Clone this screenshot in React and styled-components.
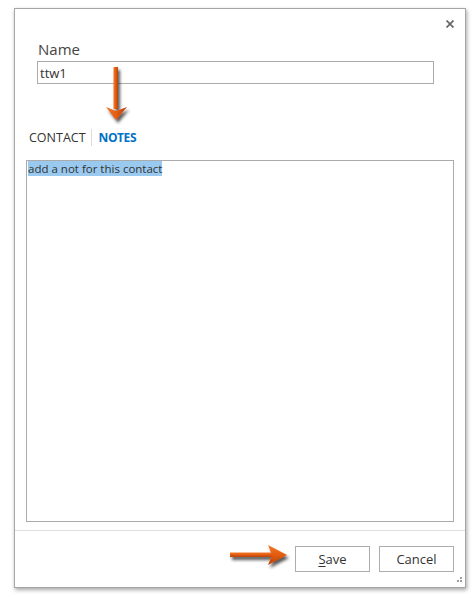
import React from "react"
import styled, { createGlobalStyle } from "styled-components"

const GlobalStyle = createGlobalStyle`
    html, body {
        margin: 0;
        padding: 0;
        background: #ffffff;
    }
    body {
        font-family: "Open Sans", "Noto Sans", sans-serif;
        color: #333333;
    }
`;

const Page = styled.div`
    position: relative;
    width: 476px;
    height: 602px;
    padding: 8px 10px 0 14px;
    box-sizing: border-box;
`;

const Dialog = styled.div`
    position: relative;
    width: 452px;
    height: 580px;
    box-sizing: border-box;
    border: 1px solid #a6a6a6;
    background: #ffffff;
    box-shadow: 1px 2px 4px rgba(0, 0, 0, 0.35);
    display: flex;
    flex-direction: column;
`;

const Header = styled.div`
    height: 30px;
    box-sizing: border-box;
    display: flex;
    justify-content: flex-end;
    align-items: flex-start;
    padding: 11px 11px 0 0;
`;

const CloseButton = styled.button`
    width: 8px;
    height: 8px;
    padding: 0;
    border: none;
    background: none;
    display: flex;
    cursor: pointer;
`;

const NameSection = styled.div`
    display: flex;
    flex-direction: column;
    padding-left: 22px;
`;

const Label = styled.label`
    font-size: 15px;
    line-height: 20px;
    height: 20px;
    padding-left: 1px;
    color: #444444;
`;

const TextInput = styled.input`
    margin-top: 2px;
    width: 397px;
    height: 23px;
    box-sizing: border-box;
    border: 1px solid #ababab;
    padding: 0 2px;
    font-family: "Open Sans", "Noto Sans", sans-serif;
    font-size: 13px;
    color: #333333;
    outline: none;
`;

const Tabs = styled.div`
    margin-top: 43px;
    height: 20px;
    padding-left: 14px;
    display: flex;
    align-items: center;
`;

const Tab = styled.span`
    font-size: ${props => props.active ? '12px' : '12.5px'};
    font-weight: ${props => props.active ? 700 : 400};
    color: ${props => props.active ? '#0072c6' : '#333333'};
    letter-spacing: ${props => props.active ? '-0.4px' : '0'};
`;

const TabDivider = styled.span`
    width: 1px;
    height: 17px;
    background: #dcdcdc;
    margin: 0 7px 0 5px;
`;

const NotesBox = styled.div`
    margin: 13px 0 0 11px;
    width: 428px;
    height: 362px;
    box-sizing: border-box;
    border: 1px solid #ababab;
    padding: 1px 0 0 1px;
    font-size: 11.5px;
    line-height: 14px;
`;

const Selected = styled.span`
    background: #99c9ef;
    color: #333333;
`;

const Footer = styled.div`
    margin-top: 8px;
    border-top: 1px solid #dedede;
    padding: 15px 11px 0 0;
    display: flex;
    justify-content: flex-end;
    gap: 9px;
`;

const Button = styled.button`
    width: 75px;
    height: 26px;
    box-sizing: border-box;
    border: 1px solid #adadad;
    background: #ffffff;
    font-family: "Open Sans", "Noto Sans", sans-serif;
    font-size: 13px;
    color: #333333;
    padding: 0;
    cursor: pointer;

    u {
        text-decoration: underline;
        text-underline-offset: 2px;
    }
`;

const Grip = styled.svg`
    position: absolute;
    right: 3px;
    bottom: 3px;
`;

const Arrow = styled.svg`
    position: absolute;
    left: ${props => props.x}px;
    top: ${props => props.y}px;
    overflow: visible;
`;

function ArrowDefs({ id, vertical }) {
    return (
        <defs>
            <linearGradient id={id + "g"} x1="0" y1="0" x2={vertical ? "1" : "0"} y2={vertical ? "0" : "1"}>
                <stop offset="0" stopColor="#f27a2a" />
                <stop offset="0.5" stopColor="#e35b10" />
                <stop offset="1" stopColor="#b8420a" />
            </linearGradient>
            <filter id={id + "s"} x="-50%" y="-50%" width="200%" height="200%">
                <feDropShadow dx="2" dy="3" stdDeviation="1.6" floodColor="#222" floodOpacity="0.75" />
            </filter>
        </defs>
    );
}

export default function App() {
    return (
        <>
            <GlobalStyle />
            <Page>
                <Dialog>
                    <Header>
                        <CloseButton aria-label="Close">
                            <svg width="8" height="8" viewBox="0 0 8 8">
                                <path d="M0.5 0.5 L7.5 7.5 M7.5 0.5 L0.5 7.5" stroke="#6a6a6a" strokeWidth="1.8" />
                            </svg>
                        </CloseButton>
                    </Header>
                    <NameSection>
                        <Label>Name</Label>
                        <TextInput defaultValue="ttw1" />
                    </NameSection>
                    <Tabs>
                        <Tab>CONTACT</Tab>
                        <TabDivider />
                        <Tab active>NOTES</Tab>
                    </Tabs>
                    <NotesBox>
                        <Selected>add a not for this contact</Selected>
                    </NotesBox>
                    <Footer>
                        <Button><u>S</u>ave</Button>
                        <Button>Cancel</Button>
                    </Footer>
                    <Grip width="7" height="7" viewBox="0 0 7 7">
                        <rect x="5" y="0" width="2" height="2" fill="#a0a0a0" />
                        <rect x="2" y="3" width="2" height="2" fill="#a0a0a0" />
                        <rect x="5" y="3" width="2" height="2" fill="#a0a0a0" />
                    </Grip>
                </Dialog>

                <Arrow x={100} y={62} width="36" height="66" viewBox="0 0 36 66">
                    <ArrowDefs id="down" vertical />
                    <g filter="url(#downs)" fill="url(#downg)">
                        <path d="M13.5 5 L18 5 L18 47 L13.5 47 Z" />
                        <path d="M6 45 L16 49 L27 45 L16 58 Z" />
                    </g>
                </Arrow>

                <Arrow x={222} y={538} width="72" height="34" viewBox="0 0 72 34">
                    <ArrowDefs id="right" />
                    <g filter="url(#rights)" fill="url(#rightg)">
                        <path d="M8 14.5 L50 14.5 L50 19 L8 19 Z" />
                        <path d="M46 7 L65 17 L46 27 L50 17 Z" />
                    </g>
                </Arrow>
            </Page>
        </>
    );
}
